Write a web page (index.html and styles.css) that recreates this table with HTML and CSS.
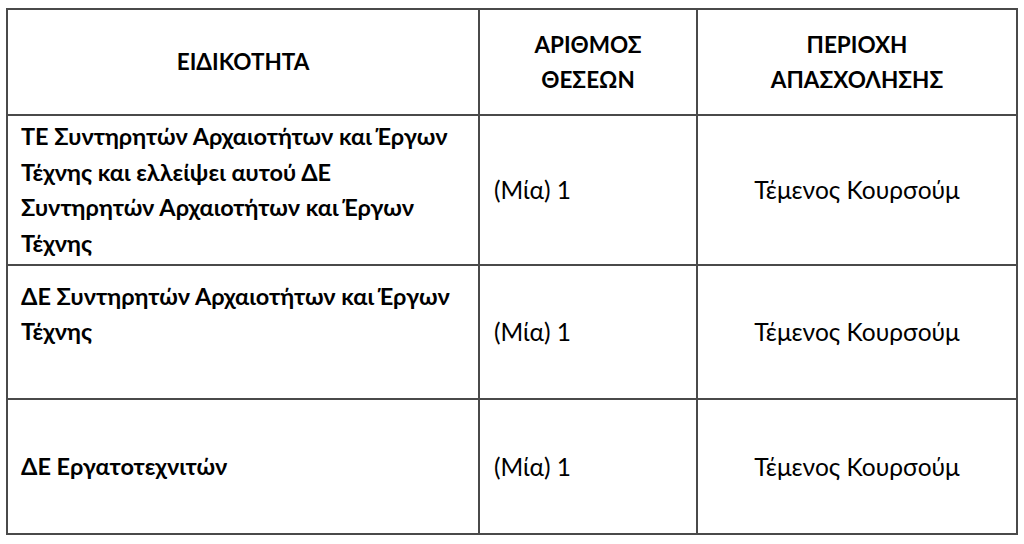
FILE: index.html
```html
<!DOCTYPE html>
<html lang="el">
<head>
<meta charset="utf-8">
<title>Θέσεις</title>
<link rel="stylesheet" href="styles.css">
</head>
<body>
<table class="posts">
  <colgroup>
    <col class="c1">
    <col class="c2">
    <col class="c3">
  </colgroup>
  <thead>
    <tr class="r-head">
      <th>ΕΙΔΙΚΟΤΗΤΑ</th>
      <th>ΑΡΙΘΜΟΣ<br>ΘΕΣΕΩΝ</th>
      <th>ΠΕΡΙΟΧΗ<br>ΑΠΑΣΧΟΛΗΣΗΣ</th>
    </tr>
  </thead>
  <tbody>
    <tr class="r1">
      <td class="spec">ΤΕ Συντηρητών Αρχαιοτήτων και Έργων Τέχνης και ελλείψει αυτού ΔΕ Συντηρητών Αρχαιοτήτων και Έργων Τέχνης</td>
      <td class="num">(Μία) 1</td>
      <td class="area">Τέμενος Κουρσούμ</td>
    </tr>
    <tr class="r2">
      <td class="spec spec-top">ΔΕ Συντηρητών Αρχαιοτήτων και Έργων Τέχνης</td>
      <td class="num">(Μία) 1</td>
      <td class="area">Τέμενος Κουρσούμ</td>
    </tr>
    <tr class="r3">
      <td class="spec">ΔΕ Εργατοτεχνιτών</td>
      <td class="num">(Μία) 1</td>
      <td class="area">Τέμενος Κουρσούμ</td>
    </tr>
  </tbody>
</table>
</body>
</html>
```

FILE: styles.css
```css
html, body {
  margin: 0;
  padding: 0;
  background: #ffffff;
}

body {
  font-family: "Lato", "Open Sans", "Noto Sans", sans-serif;
  color: #000000;
}

.posts {
  margin: 8px 0 0 6px;
  width: 1010px;
  border-collapse: collapse;
  table-layout: fixed;
  font-size: 24.5px;
  line-height: 35.5px;
}

.c1 { width: 472px; }
.c2 { width: 218px; }
.c3 { width: 320px; }

.posts th,
.posts td {
  border: 2px solid #4a4a4a;
  padding: 0 13px;
  vertical-align: middle;
}

.posts th {
  font-weight: 700;
  font-size: 22.5px;
  text-align: center;
}

.r-head { height: 106px; }
.r1 { height: 150px; }
.r2 { height: 134px; }
.r3 { height: 135px; }

.posts .spec {
  font-weight: 700;
  font-size: 23.5px;
  text-align: left;
}

.posts .spec-top {
  padding-bottom: 36px;
}

.posts .num {
  text-align: left;
  padding-left: 14px;
}

.posts .area {
  text-align: center;
}
```
